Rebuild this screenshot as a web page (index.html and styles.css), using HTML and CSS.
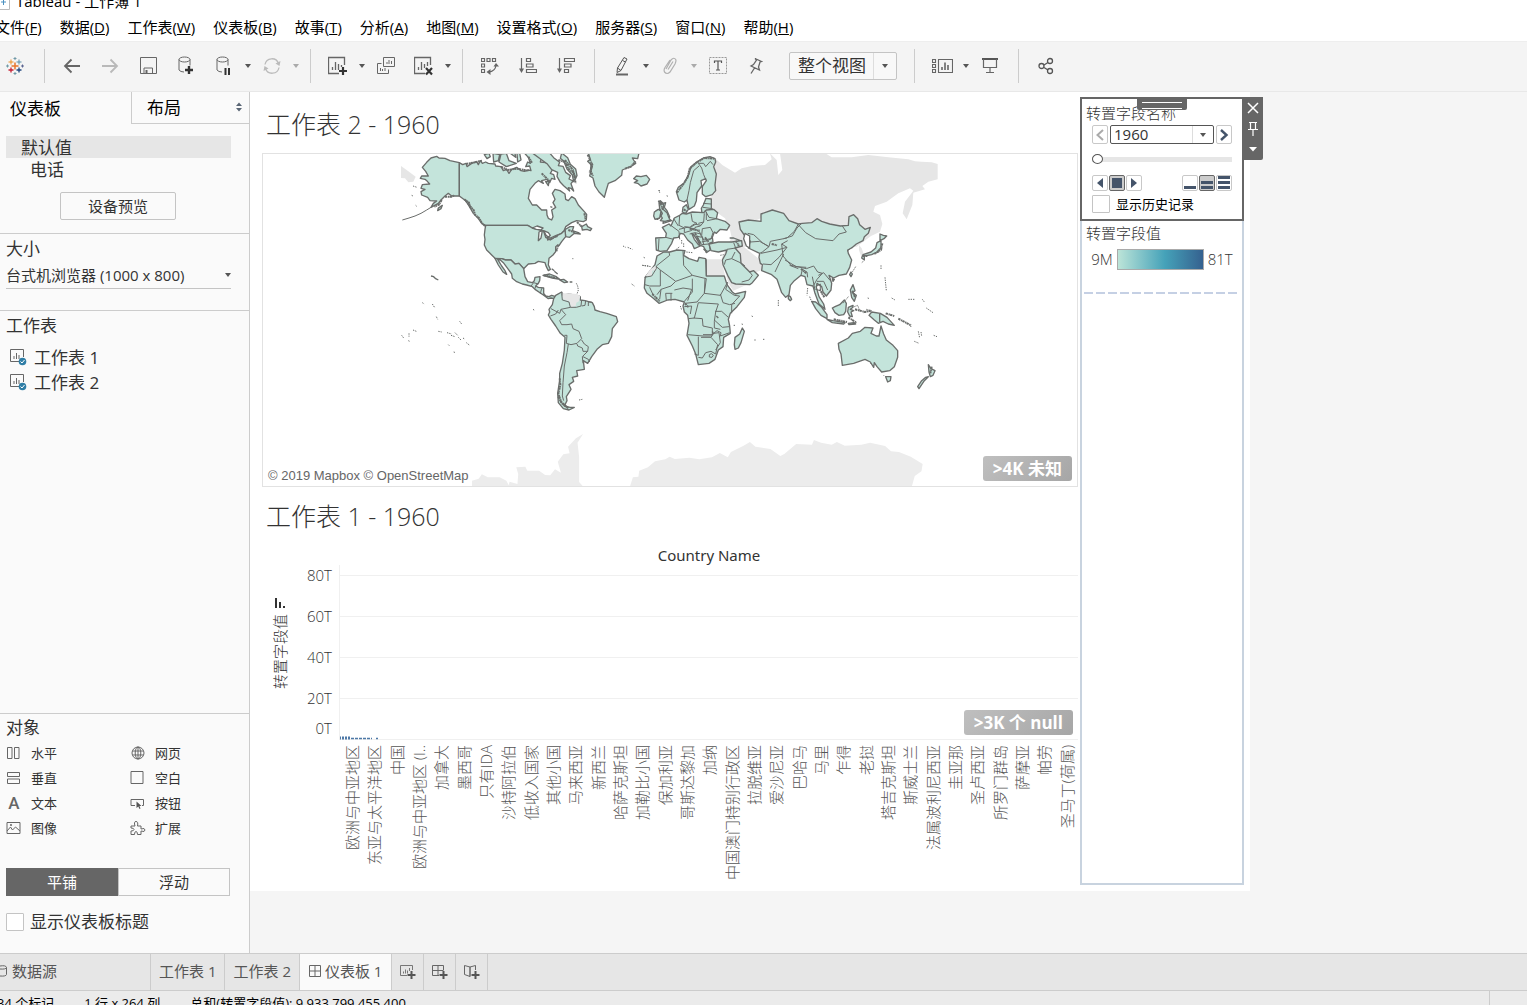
FILE: index.html
```html
<!DOCTYPE html>
<html lang="zh-CN">
<head>
  <meta charset="UTF-8">
  <meta name="viewport" content="width=device-width, initial-scale=1">
  <title>Tableau - 工作簿 1</title>
  <link rel="stylesheet" href="styles.css">
</head>
<body>

  <header class="titlebar">
    <svg width="12" height="14" viewBox="0 0 12 14"><path d="M0 12.500H9.500V0" fill="none" stroke="#bbb"/><path d="M1 5h5M3.500 2v6" stroke="#4a90c0"/></svg>
    <span>Tableau - 工作簿 1</span>
  </header>

  <nav class="menubar">
    <a href="#">文件(<u>F</u>)</a>
    <a href="#">数据(<u>D</u>)</a>
    <a href="#">工作表(<u>W</u>)</a>
    <a href="#">仪表板(<u>B</u>)</a>
    <a href="#">故事(<u>T</u>)</a>
    <a href="#">分析(<u>A</u>)</a>
    <a href="#">地图(<u>M</u>)</a>
    <a href="#">设置格式(<u>O</u>)</a>
    <a href="#">服务器(<u>S</u>)</a>
    <a href="#">窗口(<u>N</u>)</a>
    <a href="#">帮助(<u>H</u>)</a>
  </nav>

  <div class="toolbar">
    <button class="logo" aria-label="Tableau">
      <svg width="18" height="18" viewBox="0 0 18 18" fill="none">
        <path d="M9 5.500v7M5.500 9h7" stroke="#e8762c" stroke-width="1.500"/>
        <path d="M5 2.500v5M2.500 5h5" stroke="#eb9129"/>
        <path d="M13 2.500v5M10.500 5h5" stroke="#5c8fa5"/>
        <path d="M5 10.500v5M2.500 13h5" stroke="#c72035" stroke-width="1.300"/>
        <path d="M13 10.500v5M10.500 13h5" stroke="#1f457e" stroke-width="1.300"/>
        <path d="M9 0v3M7.500 1.500h3M9 15v3M7.500 16.500h3M1.500 7.500v3M0 9h3" stroke="#7199a6"/>
        <path d="M16.500 7.500v3M15 9h3" stroke="#5c6692"/>
      </svg>
    </button>
    <span class="sep"></span>
    <button class="tool" aria-label="后退"><svg width="18" height="16" viewBox="0 0 18 16"><path d="M17 8H2M8.500 1.500L2 8l6.500 6.500" fill="none" stroke="#666" stroke-width="1.800"/></svg></button>
    <button class="tool" aria-label="前进"><svg width="18" height="16" viewBox="0 0 18 16"><path d="M1 8h15M9.500 1.500L16 8l-6.500 6.500" fill="none" stroke="#b9b9b9" stroke-width="1.800"/></svg></button>
    <button class="tool" aria-label="保存"><svg width="17" height="17" viewBox="0 0 17 17"><path d="M.5.5h16v16H.500zM4 16v-5h8.500v5" fill="none" stroke="#666"/><path d="M5.500 13h2v3h-2z" fill="#666"/></svg></button>
    <button class="tool" aria-label="新建数据源">
      <svg width="18" height="20" viewBox="0 0 18 20"><g fill="none" stroke="#666"><ellipse cx="7.500" cy="3.500" rx="5.500" ry="2.500"/><path d="M2 3.500v10.500q1.500 2 5 2M13 3.500v6"/></g><path d="M12 10v8M8 14h8" stroke="#333" stroke-width="2.400"/></svg>
    </button>
    <button class="tool" aria-label="暂停自动更新">
      <svg width="18" height="20" viewBox="0 0 18 20"><g fill="none" stroke="#666"><ellipse cx="7.500" cy="3.500" rx="5.500" ry="2.500"/><path d="M2 3.500v10.500q1.500 2 5 2M13 3.500v6"/></g><path d="M10.500 12v7M14 12v7" stroke="#333" stroke-width="2"/></svg>
    </button>
    <button class="caret" aria-label="更多"></button>
    <button class="tool" aria-label="刷新">
      <svg width="18" height="18" viewBox="0 0 18 18"><path d="M2 7.500A7 7 0 0 1 15.500 6.500M16 10.500A7 7 0 0 1 2.500 11.500" fill="none" stroke="#bbb" stroke-width="1.300"/><path d="M17.500 4l-1 5-4-2.500zM.500 14l1-5 4 2.500z" fill="#bbb"/></svg>
    </button>
    <button class="caret dim" aria-label="更多"></button>
    <span class="sep"></span>
    <button class="tool" aria-label="新建工作表">
      <svg width="20" height="20" viewBox="0 0 20 20"><path d="M16.500 9V1.500h-16v16H11M4.500 14v-3M7.500 14V6M10.500 14V8M13.500 11V9" fill="none" stroke="#666" stroke-width="1.300"/><path d="M15 11v8M11 15h8" stroke="#333" stroke-width="2.200"/></svg>
    </button>
    <button class="caret" aria-label="更多"></button>
    <button class="tool" aria-label="复制">
      <svg width="18" height="18" viewBox="0 0 18 18"><path d="M6.500.5h11v9h-11zM4.500 6.500h-4v10h11v-4M3.500 14v-3M5.500 14v-2M8 14v-3M10 7V5M12 7V3M14.500 7V4" fill="none" stroke="#666"/></svg>
    </button>
    <button class="tool" aria-label="清除">
      <svg width="20" height="20" viewBox="0 0 20 20"><path d="M16.500 9V1.500h-16v16H11M4.500 14v-3M7.500 14V6M10.500 12V8M13.500 10V6" fill="none" stroke="#666" stroke-width="1.300"/><path d="M12 12l6 6.500M18 12l-6 6.500" stroke="#333" stroke-width="2.200"/></svg>
    </button>
    <button class="caret" aria-label="更多"></button>
    <span class="sep"></span>
    <button class="tool" aria-label="交换行和列">
      <svg width="18" height="18" viewBox="0 0 18 18"><path d="M.5 1.500h3v3h-3zM6 1.500h3v3H6zM11.500 1.500h3v3h-3zM.500 7h3v3h-3zM.500 12.500h3v3h-3zM7.500 15Q14.500 14.500 15 8" fill="none" stroke="#666" stroke-width="1.200"/><path d="M12.500 9.500L15 6l3 3.500zM9.500 12L5.500 15l4 3z" fill="#666"/></svg>
    </button>
    <button class="tool" aria-label="升序排序">
      <svg width="18" height="17" viewBox="0 0 18 17"><path d="M2.500 1v13M7.500 1.500h4v3h-4zM7.500 7h6.500v3H7.500zM7.500 12.500h10v3h-10z" fill="none" stroke="#666" stroke-width="1.200"/><path d="M0 11.500h5L2.500 16z" fill="#666"/></svg>
    </button>
    <button class="tool" aria-label="降序排序">
      <svg width="18" height="17" viewBox="0 0 18 17"><path d="M2.500 1v13M7.500 1.500h10v3h-10zM7.500 7h6.500v3H7.500zM7.500 12.500h4v3h-4z" fill="none" stroke="#666" stroke-width="1.200"/><path d="M0 11.500h5L2.500 16z" fill="#666"/></svg>
    </button>
    <span class="sep"></span>
    <button class="tool" aria-label="突出显示">
      <svg width="14" height="20" viewBox="0 0 14 20"><path d="M9 1.500l3 1.500-6 11.500-4 2 .5-4.500zM2.500 12l3.500 2.500M7.500 4.500l3 1.500" fill="none" stroke="#555"/><path d="M1 18.500h12" stroke="#666" stroke-width="2"/></svg>
    </button>
    <button class="caret" aria-label="更多"></button>
    <button class="tool" aria-label="组成员">
      <svg width="14" height="18" viewBox="0 0 14 18"><path d="M3 12l5-9q3-3.500 5 0 0 2-1 4l-5 8q-3 3-5.500 0-1-2 .5-4.500L7 3M5 12.500l5-8" fill="none" stroke="#b0b0b0" stroke-width="1.200"/></svg>
    </button>
    <button class="caret dim" aria-label="更多"></button>
    <button class="tool" aria-label="显示标记标签">
      <svg width="18" height="17" viewBox="0 0 18 17"><path d="M.5.500h17v16H.500z" fill="none" stroke="#999" stroke-dasharray="2 1"/><path d="M5.500 6V4h7v2M9 4v9M7 13h4" fill="none" stroke="#555" stroke-width="1.200"/></svg>
    </button>
    <button class="tool" aria-label="固定轴">
      <svg width="14" height="18" viewBox="0 0 14 18"><path d="M6 1.500l6.500 3-1.500.500-1.500 5 1 3L2 9l2.500-1.500 3-4.500zM5.500 11L2 16.500" fill="none" stroke="#666" stroke-width="1.300"/></svg>
    </button>
    <span class="fit">
      <select aria-label="适合"><option>整个视图</option></select>
    </span>
    <span class="sep"></span>
    <button class="tool" aria-label="智能推荐">
      <svg width="21" height="16" viewBox="0 0 21 16"><path d="M.5 1.500h3v3h-3zM.500 6.500h3v3h-3zM.500 11.500h3v3h-3zM6.500 1.500h14v13h-14z" fill="none" stroke="#666" stroke-width="1.100"/><path d="M10 12V9M13 12V4.500M16 12V7" stroke="#666" stroke-width="1.600"/></svg>
    </button>
    <button class="caret" aria-label="更多"></button>
    <button class="tool" aria-label="演示模式">
      <svg width="18" height="17" viewBox="0 0 18 17"><path d="M1 2h16" stroke="#555" stroke-width="2"/><path d="M2.500 2v8.500h13V2M9 10.500v5M5 15.500h8" fill="none" stroke="#666" stroke-width="1.200"/></svg>
    </button>
    <span class="sep"></span>
    <button class="tool" aria-label="共享">
      <svg width="16" height="18" viewBox="0 0 16 18"><g fill="none" stroke="#555" stroke-width="1.300"><circle cx="3.500" cy="9" r="2.500"/><circle cx="12" cy="4" r="2.500"/><circle cx="12" cy="14" r="2.500"/><path d="M6 8l4-2.500M6 10.500l4 2.500"/></g></svg>
    </button>
  </div>

  <div class="workspace">

    <aside class="sidebar">
      <div class="side-tabs">
        <button class="side-tab active">仪表板</button>
        <button class="side-tab">布局
          <svg width="6" height="10" viewBox="0 0 6 10"><path d="M0 4l3-3.500L6 4zM0 6l3 3.500L6 6z" fill="#5a6675"/></svg>
        </button>
      </div>

      <section class="panel devices">
        <ul>
          <li class="selected">默认值</li>
          <li class="child">电话</li>
        </ul>
        <button class="btn">设备预览</button>
      </section>

      <section class="panel size">
        <h2><label for="size">大小</label></h2>
        <div class="size-select">
          <select id="size"><option>台式机浏览器 (1000 x 800)</option></select>
        </div>
      </section>

      <section class="panel sheets">
        <h2>工作表</h2>
        <ul>
          <li><svg width="17" height="17" viewBox="0 0 17 17"><path d="M13.500 8V.500H.500v12H9M4 10V7M6.500 10V4M9 10V6" fill="none" stroke="#666"/><circle cx="12.500" cy="12.500" r="3.800" fill="#2f7ea6"/><path d="M10.500 12.500l1.500 1.500 2.500-3" fill="none" stroke="#fff"/></svg>工作表 1</li>
          <li><svg width="17" height="17" viewBox="0 0 17 17"><path d="M13.500 8V.500H.500v12H9M4 10V7M6.500 10V4M9 10V6" fill="none" stroke="#666"/><circle cx="12.500" cy="12.500" r="3.800" fill="#2f7ea6"/><path d="M10.500 12.500l1.500 1.500 2.500-3" fill="none" stroke="#fff"/></svg>工作表 2</li>
        </ul>
      </section>

      <section class="panel objects">
        <h2>对象</h2>
        <div class="object-grid">
          <button><svg width="16" height="16" viewBox="0 0 16 16"><path d="M1.500 2.500h4.500v11H1.500zM8.500 2.500H13v11H8.500z"/></svg>水平</button>
          <button><svg width="16" height="16" viewBox="0 0 16 16"><circle cx="8" cy="8" r="6"/><ellipse cx="8" cy="8" rx="2.800" ry="6"/><path d="M2.500 6h11M2.500 10h11M8 2v12"/></svg>网页</button>
          <button><svg width="16" height="16" viewBox="0 0 16 16"><path d="M1.500 2.500h12v4h-12zM1.500 9h12v4.500h-12z"/></svg>垂直</button>
          <button><svg width="16" height="16" viewBox="0 0 16 16"><path d="M1 1.500h12v12H1z"/></svg>空白</button>
          <button><span class="letter">A</span>文本</button>
          <button><svg width="16" height="16" viewBox="0 0 16 16"><path d="M5 10.500H1v-6h12.500v6H12"/><path d="M6.500 6.500l5 4.500H9.500l1 2.500-1 .5-1.200-2.500-1.800 1.500z" fill="#555" stroke="none"/></svg>按钮</button>
          <button><svg width="16" height="16" viewBox="0 0 16 16"><path d="M1 2.500h13v11H1zM1 11l3.500-4 2 3 3-3 4.500 4"/><circle cx="5" cy="5" r=".7"/></svg>图像</button>
          <button><svg width="16" height="16" viewBox="0 0 16 16"><path d="M1 6h4Q3.500 1.500 6 1.500T7.500 6H11v3q4-1.500 4 1t-4 1v3.500H7.500q0-3-1.500-3t-1.500 3H1V11q3 0 3-1.500T1 8z"/></svg>扩展</button>
        </div>
        <div class="toggle">
          <button class="on">平铺</button>
          <button>浮动</button>
        </div>
        <label class="check"><input type="checkbox">显示仪表板标题</label>
      </section>
    </aside>

    <main class="canvas">
      <div class="dashboard">
        <div class="views">

          <section>
            <h1>工作表 2 - 1960</h1>
            <div class="map">
              <svg viewBox="3 3 2442 996" role="img" aria-label="世界地图">
                <!-- land without data -->
                <g class="nodata">
                  <g transform="translate(399 -9)">
                    <path d="M18 48L38 62 48 70 62 80 55 95 40 97 30 85 18 84z"/>
                  </g>
                  <g transform="translate(1119 -9)">
                    <path d="M240 25L262 45 300 68 320 55 350 48 390 45 410 28 405 10 425 30 430 75 442 60 435 10 470 9 570 9 590 22 650 22 700 15 760 22 820 28 840 34 860 35 890 37 908 42V88L880 95 862 108 870 118 835 128 832 165 815 208 803 190 810 155 835 122 825 115 790 130 755 155 720 168 715 185 735 195 742 222 735 245 708 258 665 290 640 290 500 240 410 190 320 230 340 270 328 292 345 305 378 332 380 360 350 372 345 400 295 422 280 400 260 325 290 262 285 240 270 205 235 180 215 150 240 130z"/>
                    <path d="M213 328h45l12 48h-57zM672 285l8 10 8 22-8 6-8-22z"/>
                  </g>
                  <g class="antarctica" transform="translate(624 801) scale(1.186 1)">
                    <path d="M5 198V182L22 176 30 163 45 172 75 172 92 182 98 196 100 185 120 192 122 162 117 142 140 140 145 152 175 152 190 165 203 166 215 148 230 158 222 125 236 103 252 100 248 80 268 55 286 42 272 68 276 110 276 186 285 198zM405 198L412 172 426 170 428 152 450 142 468 124 494 118 505 110 518 117 555 113 580 118 612 112 632 99 652 112 660 96 692 77 708 66 722 80 760 87 785 108 795 102 825 72 865 74 870 60 888 68 915 74 928 66 948 77 990 74 1012 68 1050 78 1065 94 1085 96 1115 110 1145 132 1142 154 1125 168 1118 198z"/>
                  </g>
                </g>

                <!-- Alaska, Canada, United States, Mexico -->
                <g class="land" transform="translate(399 -9)">
                  <path d="M193 38L165 32 150 25 132 24 125 19 108 24 95 37 82 52 92 64 100 78 80 78 76 85 90 88 97 94 104 102 82 104 78 115 90 118 78 125 80 135 98 142 105 152 125 153 115 160 108 172 130 160 138 150 150 138 160 130 170 138 193 138z"/>
                  <path class="border" d="M108 172L95 180 78 190 60 198 42 204 22 210"/>
                  <path d="M193 38L203 44 213 40 216 50 230 40 245 35 250 44 256 32 262 40 272 36 280 40 300 42 302 48 318 50 325 62 335 58 342 70 350 58 365 52 378 62 388 64 400 60 408 62 404 48 392 50 398 36 406 40 400 22 388 9 425 9 440 22 436 36 452 38 466 44 472 60 466 70 476 74 480 88 470 85 464 98 455 88 440 92 445 100 430 92 420 100 405 118 400 145 412 165 425 165 440 180 455 180 456 195 460 205 470 210 474 200 470 180 482 172 474 158 480 148 472 130 480 118 495 122 510 132 512 148 520 152 530 140 540 146 550 165 568 185 575 193 574 210 565 215 545 212 530 218 512 230 508 240 525 230 536 230 532 242 550 248 556 252 538 250 524 262 512 260 510 240 500 250 484 256 466 264 452 262 446 244 430 238 412 234 398 226 272 226 262 222 250 206 235 190 222 168 212 152 193 138z"/>
                  <path d="M272 226L398 226 412 234 430 238 446 244 452 262 466 270 484 258 500 250 510 240 512 260 500 275 492 287 488 285 482 290 482 305 474 315 462 325 460 345 466 358 460 362 454 350 450 338 430 334 420 340 400 342 386 356 372 340 360 342 348 330 332 330 320 326 300 325 285 310 275 300 268 285 270 268 268 255 270 238z"/>
                  <path d="M300 325L320 326 332 330 348 330 360 342 372 340 386 356 390 380 398 395 412 398 418 392 420 382 435 380 434 392 430 400 422 408 430 412 446 414 446 430 452 438 462 440 470 436 482 440 478 446 468 444 460 446 445 435 420 418 412 410 395 405 382 402 365 395 352 385 350 372 340 358 325 338 316 330 308 328 320 348 330 362 335 373 324 366 310 345z"/>
                  <path class="border" d="M408 408L416 398 430 402M422 408l-2 8M440 415l-4 16"/>
                  <path class="water" d="M412 234l14-6 18 6-6 6-14-2zM432 246l10-4-4 22-8 8zM446 242l14 6 6 8-6 6-8-8zM456 270l20-6M478 262l10-3"/>
                  <path d="M268 14l14-4 4 10-10 6zM294 10l20 4-4 18-14 4zM318 12l16-2 8 22 22 8-30 10-22-14zM346 10l14 0 2 12zM366 10l8 0 4 20-10 6zM412 9h52l12 14 18 14-4 10 14 2 8 18 14 10-4 10 12 6-6 8 8 22-8-8-8-2 4 10-18-16-10-10-10-18 2-12-18-8-14-18zM500 9l18 14 8 20 16 14 4 20-10 18-4-20-16-18-10-24-10-8zM452 95l10 0-2 12zM466 170l6 2"/>
                  <path d="M580 9L586 28 578 34 592 48 584 78 594 84 600 108 612 126 628 142 634 120 640 100 660 92 680 76 682 60 710 48 722 40 712 24 728 26 732 9zM716 86l8-8 14 2 16-4 10 12-8 14-18 6-10-8-10-2 10-6zM560 230l14-8 4 8 12 6-4 6-10-4-14 2z"/>
                  <path d="M444 376l20-4 20 8 10 8-22-4zM494 390l12-2 12 8-10 2zM524 396h8M470 356l8 6M478 364l10 8M108 378l8 2 6 6 8 4M128 182l10-6 4-10-12 8zM784 182l10-4 4 20-10 10-8-4zM796 152l8 8 8-2-4 14 8 10 8 18-2 8 8 4-26 8 2-10-4-6 6-8-6-14-6-8z"/>
                </g>

                <!-- South America -->
                <g class="land" transform="translate(399 -9)">
                  <path d="M482 436L500 426 505 436 520 432 545 436 556 440 556 450 570 452 592 458 598 470 600 480 615 485 635 490 664 500 668 515 652 536 650 560 640 580 622 584 606 598 590 620 578 640 565 632 568 658 545 662 548 678 532 682 536 694 522 704 528 718 514 740 516 752 508 768 525 772 538 772 522 780 505 776 490 758 488 730 494 690 494 670 502 640 508 600 510 562 496 550 482 528 468 508 460 495 464 486 462 478 472 464 476 446z"/>
                  <path class="gap" d="M502 430L520 430 545 432 556 438 552 454 544 458 542 468 530 472 526 466 524 454 504 448z"/>
                  <path class="border" d="M500 430L502 450 522 456 526 472 498 478 494 490 468 476M466 498L482 492 490 480M498 478L512 494 494 512 500 524 516 524 530 522 534 536 552 544 560 566 546 580 528 584 514 580 516 556 508 556M560 570l8 12 12 8-2 14-14 0-2-10-14-6-2-6M578 604l-16 16 2 20M564 620l16 8 4 8M520 582l-4 26-8 40-4 50-2 40 4 14M526 472l18 0 14-4 2-18M560 468l10-2 2-14M580 468l0-12 10 0"/>
                  <g class="fjords"><path d="M208 148l14 10 4 14 10 8 4 14 12 10 8 14 12 12M490 30l20 6 12 22 14 10 6 18M212 152l20 24M494 685l2 20-6 26 8 24 22 20M490 740l10 20 20 14M140 150l-8 14-14 6M150 140l20 0 8-4M588 40l0 26 6 12M690 56l18-6 14-16M790 152l12 10M546 216l14 14M490 284l-6 20M213 42l30-6 18-4M318 50l20 10 28-4 34 6M400 20l12 20M440 70l24 24M510 30l24 30 8 40M446 376l40 8M520 240l22 8M568 190l4 18M578 14l14 30-8 24"/></g>
                  <path class="isles" d="M544 400l4 8 2 12-4 12M414 478l6 4M20 556l6 8M42 550l0 10M40 572l4 2M54 540l10 4M82 458l6 4M112 462l8 12M124 500l4 8M194 514l6 8M130 544l10 2M156 548l14 4M168 556l12 4M180 548l8 8M190 562l8 8M204 564l6 4M214 578l10 8M160 584l4 4M176 606l6 2M684 288l8 4M698 292l14 6M742 346l20 2M746 322l4 2M710 402l8 6M792 120l2 8M54 108l12 4M50 136l4 2M62 166l4 4M532 326l3 0M552 750l10-2"/>
                </g>

                <!-- Europe, Africa, Asia and Oceania -->
                <g class="land" transform="translate(1119 -9)">
                  <path d="M124 125L130 112 148 98 162 72 168 50 185 36 205 24 225 20 240 26 242 36 236 50 244 72 240 105 242 122 232 134 212 140 202 132 202 110 214 92 212 86 198 92 200 108 186 128 184 152 178 168 162 178 156 150 148 156 132 150z"/>
                  <path class="border" d="M156 150l6-28 4-24 10-36 16-14M190 40l10 14 6 20 6 14M190 40l16 0 6 10 14-16 8 10"/>
                  <path d="M144 172l10-8 6 14-8 12-10-4zM72 158l14 6-2 14 12 10 6 16 4 6-16 4-14-2 6-8-4-6 4-8-8-14zM58 186l12-8 8 6-4 20-14 4-4-10zM205 165l8-20 16 2 0 28 8 8 2 10-38-2-2-16z"/>
                  <path d="M82 232L102 222 108 228 118 204 134 196 142 190 154 192 172 186 206 188 214 180 236 178 248 188 244 206 270 214 284 226 276 240 256 238 244 250 238 246 232 262 234 276 222 280 226 300 214 308 206 290 196 286 184 266 176 254 170 250 178 268 190 284 196 288 178 296 172 282 158 270 146 252 136 250 130 262 116 264 110 280 96 302 76 304 64 300 62 264 92 262 94 250z"/>
                  <path class="border" d="M110 228l22 16 2 24M134 196l-2 30 16 8 0 14M168 190l4 24 14 6-20 12-18-2M208 190l-2 26-16 4M206 216l-10 12-16 4M202 236l24-4 8 16-6 18-22 4-6-14zM246 206l-30 6M178 236l16 10 6 16-16-4M92 262l24 6M72 266l-2 34M190 266l10 18 20-2M214 210l0-24M116 206l14 22M132 238l24-6 20 4M148 248l20-6 14-10M166 230l12-8 20 4M164 252l16-4 18 4M200 276l18-4 14-8M202 262l4 22M186 258l10 24M204 160l24 2M204 172l28 4M210 180l12 22 22 4"/>
                  <path d="M222 282L250 276 290 276 320 272 322 288 300 294 316 312 318 340 332 354 344 366 356 362 370 376 352 398 344 404 302 402 290 398 278 376 264 344 262 330 272 312 276 300 250 306 228 302zM284 264l12 0 20 8"/>
                  <path class="border" d="M296 278l6 16M276 298l26-4M272 330l18-4 10-20M272 330l-4 14M290 326l30 14 10 8M344 366l8 10-10 14-22 6"/>
                  <path d="M60 344L66 318 86 306 104 306 126 300 150 302 146 316 162 326 188 334 192 322 212 326 214 378 268 378 276 404 292 426 300 432 332 424 328 442 306 470 286 490 280 508 284 528 286 550 266 562 264 590 250 600 240 628 222 640 190 644 182 612 172 588 156 556 162 520 158 496 148 486 144 468 148 456 120 448 98 450 72 460 54 444 36 430 28 414 30 386 32 380z"/>
                  <path class="gap" d="M32 378l14-20 14-10 6 4-2 8-12 2-2 16z"/>
                  <path class="border" d="M102 306l2 10-40 32 0 8-14 22-22 4M64 350l12 10 0 48-32 0-14-4M76 360l46 34 50-18-26-30-2-44M172 376l42 10M214 328v50M122 394l-14 14-30 10-12 16M44 412l10 22M78 418l-4 30M92 430l2 22M108 430v22M92 430h20M118 420l26-6 26 4-12 34M172 386l0 40-24 28M210 386l-2 44-22 26-36 4M214 386l-6 44 48 6 22-40M256 432l8 26 20 6 16-4M278 400l-6 18 26 18 16 2-24 26 0 26M190 458l60 4-8 24-4 28M190 458l-12 46-18 2M148 470l22-2-4 24M176 504l26 2 2 22 28 6 0 20-28 0M158 554l46 4 22 0 20-16 12 6-2 10 28-10M190 560l0 56-12-4M198 562l30 0 20 22-6 28-14-8-16 4-10 16-12-2M228 562l8-12 16-2 4 30-14 22M240 484l20 0 20 18M238 510l24 22 20-2M238 514l0 20 18 4"/>
                  <path d="M298 584l2-22 14-10 8-18 6 10-10 34-8 16-10 4z"/>
                  <path class="border" d="M223 614l6-3 6 5-4 6-8-1z"/>
                  <path d="M312 216L340 210 378 214 378 192 412 180 446 190 462 212 490 222 502 220 530 218 546 206 560 214 584 222 616 228 640 226 642 200 656 194 668 206 674 224 690 238 706 232 700 250 688 260 684 272 664 282 650 294 638 300 640 310 650 330 644 352 634 372 612 376 596 384 582 376 590 400 588 420 574 438 564 426 560 410 546 400 544 412 552 440 566 462 570 478 552 462 540 430 534 408 516 404 510 380 498 376 478 392 466 406 462 434 452 442 440 428 426 388 410 374 380 362 382 344 376 340 372 322 374 310 340 294 346 274 330 258 316 238z"/>
                  <path class="border" d="M338 250l18 4 26 24 20 12 4-16 50-10 22-20 12-22M346 276l28-2 28 16-20 16-8 4M378 310l48-10 30-8-24 30-24 22-24-2M456 292l-16-10 18-10M500 220l-14 14-14 24-26 8M490 224l22 24 30 18 52 6 18-20 22-6-12-18M440 282l4 36 24 28 46 10 22-8 12 18 14 4-16 18-10 18M446 312l-6 12-20 42M450 330l34 20 30 2M464 346l26 10M498 376l4-18 14 8 2 16M532 380l8 40M550 376l16-8 20 24M546 394l20 0 12 26M542 410l14-8 0 20-14-4M636 304l14-12"/>
                  <path d="M460 436l6 4 4 8-4 4-6-6zM735 252l10 4 10 2-8 8-12 6zM738 272l0 20-12 14-16 8-22 4 0 12-8-6 4-10 24-8 14-12 4-16zM648 366l4 6-4 8-4-6zM592 386l6 2-4 6zM530 454l12 2 18 16 16 22 0 12-18-10-16-20zM576 508l18 4 36 6-4 4-34-4zM592 474l8-4 14-6 14-14 6 10-2 24-6 10-14 2-12-8zM640 472l14-6 0 6-8 6 10 4-8 4 4 14-8-2-6-12zM646 420l8-16 6 18-8 6 12 8-6 18-8-12zM640 520l16-2 6 4-20 2zM710 486l26 4 20 12 22 24-18-4-16-8-14 6-12-10-16-14zM734 490v26M610 580L640 564 652 550 676 544 690 532 714 534 708 550 724 558 732 558 738 528 746 552 754 570 774 586 788 602 788 622 778 650 764 662 740 666 726 650 718 638 716 652 706 636 690 628 656 640 622 646 618 612 612 598zM752 680l16 0-2 12-8 4zM880 644l8 12 12 6-6 14-8 4-4-14zM880 680l-12 12-16 24-4-6 12-18 12-10z"/>
                  <path class="water" d="M330 250l14 8 0 36-10-6-8-22zM232 544l4 8M244 498l6 6"/>
                  <g class="fjords"><path d="M126 128l18-24 14-22 6-26 20-18 24-14 30 2M146 178l10 6M76 160l8 20M652 422l8 20M206 296l10 8M596 508l40 8M640 502l24 16M660 478l30 8 18-4M752 490l26 8M790 506l38 20M410 282l16 4M498 356l16 14M52 432l22 22M210 262l10 14M150 460l10 12M302 272l10 16M568 442l-14-24M890 650l-4 20M742 280l-4 20-20 12M684 318l14 0M180 250l16 30M164 236l30 6"/></g>
                  <path class="isles" d="M72 120l2 8M96 136l2 6M140 270l0 12M124 298l10-8M146 280v14M154 306l18 2M256 316l10-2M518 414l-2 22M524 440l6 16M640 440l-16 20M658 470l10-4 6 16M686 488l10-6M826 528l4 4M838 574l14 6M850 544l4 20M858 546l2 12M896 556l10 4M738 346v14M750 382l4 40M698 444l6 2M770 444l10 6M820 448h20M862 448l6 8M874 474l20 14M350 498l4 2M358 570h4M384 568h4M296 526l6 0M320 522l6 2M22 346l26 4M430 450v20M136 468l4 12M648 524l16-6M706 640l4 2M746 676l2 2M662 350l-10 16M684 334l-4 6M694 478l16 4M606 520h6"/>
                </g>
              </svg>
              <small>© 2019 Mapbox © OpenStreetMap</small>
              <button class="badge">&gt;4K 未知</button>
            </div>
          </section>

          <section class="chart-sheet">
            <h1>工作表 1 - 1960</h1>
            <h3>Country Name</h3>
            <div class="chart">
              <div class="axis-title">
                <svg width="12" height="12" viewBox="0 0 12 12"><path d="M2 1v10M6 5v6M10 9v2" stroke="#333" stroke-width="2"/></svg>
                <span>转置字段值</span>
              </div>
              <div class="ticks"><span>80T</span><span>60T</span><span>40T</span><span>20T</span><span>0T</span></div>
              <div class="plot">
                <svg viewBox="0 0 739 175" preserveAspectRatio="none">
                  <path d="M0 10.500H739M0 51.500H739M0 92.500H739M0 133.500H739M0 174.500H739M.500 0V175" stroke="#f0f0f0"/>
                  <path d="M1 173h1M3 173h2M6 173h2M9 173h2" stroke="#4e79a7" stroke-width="3"/>
                  <path d="M12 173.500h21M37 173.500h2" stroke="#4e79a7" stroke-width="1.500" stroke-dasharray="3 1"/>
                </svg>
                <button class="badge">&gt;3K 个 null</button>
              </div>
              <div class="countries">
                <span>欧洲与中亚地区</span>
                <span>东亚与太平洋地区</span>
                <span>中国</span>
                <span>欧洲与中亚地区 (I..</span>
                <span>加拿大</span>
                <span>墨西哥</span>
                <span>只有IDA</span>
                <span>沙特阿拉伯</span>
                <span>低收入国家</span>
                <span>其他小国</span>
                <span>马来西亚</span>
                <span>新西兰</span>
                <span>哈萨克斯坦</span>
                <span>加勒比小国</span>
                <span>保加利亚</span>
                <span>哥斯达黎加</span>
                <span>加纳</span>
                <span>中国澳门特别行政区</span>
                <span>拉脱维亚</span>
                <span>爱沙尼亚</span>
                <span>巴哈马</span>
                <span>马里</span>
                <span>乍得</span>
                <span>老挝</span>
                <span>塔吉克斯坦</span>
                <span>斯威士兰</span>
                <span>法属波利尼西亚</span>
                <span>圭亚那</span>
                <span>圣卢西亚</span>
                <span>所罗门群岛</span>
                <span>萨摩亚</span>
                <span>帕劳</span>
                <span>圣马丁(荷属)</span>
              </div>
            </div>
          </section>
        </div>

        <div class="legends">
          <section class="pages">
            <div class="grip"></div>
            <div class="card-tools">
              <button aria-label="移除"><svg width="12" height="12" viewBox="0 0 12 12"><path d="M1 1l10 10M11 1L1 11" stroke="#fff" stroke-width="1.500"/></svg></button>
              <button aria-label="固定"><svg width="12" height="14" viewBox="0 0 12 14"><path d="M2 .500h8M3.500 .500v7M8.500 .500v7M1 7.500h10M6 7.500V14" fill="none" stroke="#fff" stroke-width="1.200"/></svg></button>
              <button aria-label="更多选项"><svg width="8" height="5" viewBox="0 0 8 5"><path d="M0 0h8L4 4.500z" fill="#fff"/></svg></button>
            </div>
            <h2>转置字段名称</h2>
            <div class="row">
              <button class="mini" aria-label="上一个"><svg width="10" height="12" viewBox="0 0 10 12"><path d="M8 1L2.500 6 8 11" fill="none" stroke="#aaa" stroke-width="2"/></svg></button>
              <span class="year"><select aria-label="转置字段名称"><option>1960</option></select></span>
              <button class="mini" aria-label="下一个"><svg width="10" height="12" viewBox="0 0 10 12"><path d="M2 1l5.500 5L2 11" fill="none" stroke="#44546a" stroke-width="2.400"/></svg></button>
            </div>
            <input class="slider" type="range" min="0" max="58" value="0" aria-label="年份">
            <div class="row playback">
              <button class="mini" aria-label="向后播放"><svg width="14" height="14" viewBox="0 0 14 14"><path d="M10 2v10L4 7z" fill="#44546a"/></svg></button>
              <button class="mini on" aria-label="停止"><svg width="14" height="14" viewBox="0 0 14 14"><path d="M2 2h10v10H2z" fill="#44546a"/></svg></button>
              <button class="mini" aria-label="向前播放"><svg width="14" height="14" viewBox="0 0 14 14"><path d="M4 2v10l6-5z" fill="#44546a"/></svg></button>
              <span class="spacer"></span>
              <button class="mini" aria-label="慢速"><svg width="14" height="14" viewBox="0 0 14 14"><path d="M1 10h12v3H1z" fill="#44546a"/></svg></button>
              <button class="mini on" aria-label="中速"><svg width="14" height="14" viewBox="0 0 14 14"><path d="M1 5h12v3H1zM1 10h12v3H1z" fill="#44546a"/></svg></button>
              <button class="mini" aria-label="快速"><svg width="14" height="14" viewBox="0 0 14 14"><path d="M1 0h12v3H1zM1 5h12v3H1zM1 10h12v3H1z" fill="#44546a"/></svg></button>
            </div>
            <label class="check"><input type="checkbox">显示历史记录</label>
          </section>
          <section class="color-legend">
            <h2>转置字段值</h2>
            <div class="ramp"><span>9M</span><i></i><span>81T</span></div>
            <div class="drop-line"></div>
          </section>
        </div>
      </div>
    </main>
  </div>

  <nav class="sheet-tabs">
    <button class="source"><svg width="8" height="14" viewBox="0 0 8 14"><path d="M0 2q6-1 6.500 1.500v7Q6 12.500 0 12M0 5q6 .500 6.500-1.500" fill="none" stroke="#666"/></svg>数据源</button>
    <button>工作表 1</button>
    <button>工作表 2</button>
    <button class="current"><svg width="12" height="12" viewBox="0 0 12 12"><path d="M.5.500h11v11H.500zM6 0v12M0 6h12" fill="none" stroke="#666"/></svg>仪表板 1</button>
    <button class="add" aria-label="新建工作表"><svg width="16" height="16" viewBox="0 0 16 16"><path d="M12.500 6V1.500H.500v10H7M3.500 9.500V7.500M5.500 9.500V5.500M7.500 9.500V6.500M9.500 7V4" fill="none" stroke="#777"/><path d="M11.500 7v8M7.500 11h8" stroke="#555" stroke-width="2"/></svg></button>
    <button class="add" aria-label="新建仪表板"><svg width="16" height="16" viewBox="0 0 16 16"><path d="M11.500 6V1.500H.500v10H7M6 1.500v10M.500 6.500h11" fill="none" stroke="#666"/><path d="M11.500 7v8M7.500 11h8" stroke="#555" stroke-width="2"/></svg></button>
    <button class="add" aria-label="新建故事"><svg width="16" height="16" viewBox="0 0 16 16"><path d="M6 3L.500 1.500v9L6 12.500zL11.500 1.500V6M6 3v9.500" fill="none" stroke="#666"/><path d="M11.500 7v8M7.500 11h8" stroke="#555" stroke-width="2"/></svg></button>
  </nav>

  <footer class="statusbar">
    <span>34 个标记</span>
    <span>1 行 x 264 列</span>
    <span>总和(转置字段值): 9,933,799,455,400</span>
  </footer>

</body>
</html>
```
FILE: styles.css
```css
* {
  box-sizing: border-box;
}

body {
  margin: 0;
  height: 100vh;
  display: flex;
  flex-direction: column;
  overflow: hidden;
  font-family: "Open Sans", "Noto Sans CJK SC", sans-serif;
  font-size: 15px;
  color: #333;
  background: #fff;
}

button,
select,
input {
  font: inherit;
  color: inherit;
}

button {
  padding: 0;
  border: none;
  background: none;
  cursor: pointer;
}

select {
  appearance: none;
  border: none;
  background: none;
  padding: 0;
  outline: none;
}

h1, h2, h3, ul {
  margin: 0;
  padding: 0;
  list-style: none;
  font-weight: normal;
}

svg {
  flex: none;
}

/* title and menu */

.titlebar {
  flex: none;
  height: 16px;
  display: flex;
  align-items: flex-end;
  gap: 4px;
  padding-bottom: 5px;
  overflow: hidden;
  color: #000;
}

.titlebar span {
  line-height: 20px;
}

.menubar {
  flex: none;
  height: 25px;
  display: flex;
  align-items: center;
  gap: 18px;
  margin-left: -5px;
  padding-bottom: 2px;
  white-space: nowrap;
}

.menubar a {
  color: #000;
  text-decoration: none;
  line-height: 21px;
}

/* toolbar */

.toolbar {
  flex: none;
  height: 51px;
  display: flex;
  align-items: center;
  padding-bottom: 2px;
  background: #f4f4f4;
  border-top: 1px solid #eee;
  border-bottom: 1px solid #e8e8e8;
}

.toolbar button {
  flex: none;
  height: 30px;
  display: flex;
  align-items: center;
  justify-content: center;
}

.toolbar .logo {
  width: 30px;
  margin-right: 5px;
}

.toolbar .tool {
  width: 38px;
}

.toolbar .caret {
  width: 10px;
}

.caret::after,
.fit::after,
.size-select::after,
.year::after {
  content: "";
  border: 3px solid transparent;
  border-top: 4px solid #555;
  border-bottom: none;
}

.caret.dim::after {
  border-top-color: #aaa;
}

.sep {
  width: 1px;
  height: 34px;
  margin: 0 8px 0 9px;
  background: #ccc;
}

.fit {
  width: 108px;
  height: 28px;
  display: flex;
  align-items: center;
  margin: 0 8px 0 14px;
  padding-right: 8px;
  border: 1px solid #c4c4c4;
  border-radius: 2px;
  background: #f8f8f8;
}

.fit select {
  width: 84px;
  flex: 1;
  height: 26px;
  margin-right: 8px;
  padding-left: 8px;
  border-right: 1px solid #ddd;
  font-size: 17px;
}

/* sidebar */

.workspace {
  flex: 1;
  min-height: 0;
  display: flex;
}

.sidebar {
  flex: none;
  width: 250px;
  display: flex;
  flex-direction: column;
  background: #fafafa;
  border-right: 1px solid #ccc;
}

.side-tabs {
  display: flex;
  height: 32px;
  font-size: 17px;
  color: #000;
}

.side-tab {
  flex: 1;
  display: flex;
  align-items: center;
  justify-content: space-between;
  padding: 0 7px 2px 15px;
  border-left: 1px solid #ccc;
  border-bottom: 1px solid #ccc;
}

.side-tab.active {
  flex: none;
  width: 131px;
  padding-left: 10px;
  border: none;
}

.panel {
  padding: 0 18px 0 6px;
  border-bottom: 1px solid #ccc;
}

.panel h2 {
  font-size: 17px;
  line-height: 30px;
}

.devices {
  height: 110px;
  padding-top: 12px;
}

.devices li {
  padding-left: 15px;
  font-size: 17px;
  line-height: 23px;
}

.devices .selected {
  height: 22px;
  background: #e6e6e6;
}

.devices .child {
  padding-left: 24px;
}

.btn {
  display: block;
  width: 116px;
  height: 28px;
  margin: 11px 0 0 54px;
  padding-bottom: 2px;
  border: 1px solid #c4c4c4;
  border-radius: 2px;
}

.size {
  height: 77px;
}

.size-select {
  display: flex;
  align-items: center;
  height: 25px;
  padding-bottom: 3px;
  border-bottom: 1px solid #c4c4c4;
}

.size-select select {
  flex: 1;
}

.sheets {
  flex: 1;
}

.sheets ul {
  margin-top: 4px;
}

.sheets li {
  display: flex;
  align-items: center;
  gap: 7px;
  padding-left: 4px;
  font-size: 17px;
  line-height: 25px;
}

.objects {
  height: 239px;
  border: none;
}

.objects h2 {
  line-height: 28px;
}

.object-grid {
  display: grid;
  grid-template-columns: 124px 1fr;
  grid-auto-rows: 25px;
}

.object-grid button {
  display: flex;
  align-items: center;
  gap: 9px;
  padding-bottom: 4px;
  font-size: 13px;
}

.object-grid svg {
  fill: none;
  stroke: #666;
}

.letter {
  width: 16px;
  font-family: "Roboto", sans-serif;
  font-size: 17px;
  font-weight: 500;
  color: #666;
}

.toggle {
  display: flex;
  width: 224px;
  height: 28px;
  margin: 26px 0 16px;
}

.toggle button {
  flex: 1;
  padding-bottom: 2px;
  border: 1px solid #c4c4c4;
}

.toggle .on {
  background: #666;
  border-color: #666;
  color: #fff;
}

.check {
  display: flex;
  align-items: center;
  gap: 6px;
  font-size: 17px;
  line-height: 20px;
}

.check input {
  appearance: none;
  width: 18px;
  height: 18px;
  margin: 0;
  border: 1px solid #c4c4c4;
  border-radius: 1px;
  background: #fff;
}

/* dashboard */

.canvas {
  flex: 1;
  min-width: 0;
  background: #f5f5f5;
}

.dashboard {
  display: flex;
  max-width: 1000px;
  height: 799px;
  padding: 5px 6px 6px 12px;
  background: #fff;
}

.views {
  flex: 1;
  min-width: 0;
}

h1 {
  height: 56px;
  padding-left: 4px;
  font-size: 25px;
  font-weight: 300;
  line-height: 54px;
}

.map {
  position: relative;
  height: 334px;
  border: 1px solid #e2e2e2;
  overflow: hidden;
}

.map > svg {
  display: block;
  width: 100%;
  height: 100%;
}

.map small {
  position: absolute;
  left: 5px;
  bottom: 2px;
  font-family: "Liberation Sans", sans-serif;
  font-size: 13px;
  line-height: 16px;
  color: #666;
}

.nodata {
  fill: #e6e6e6;
}

.antarctica {
  fill: #ececec;
}

.land {
  fill: none;
  stroke: #6a6d6b;
  stroke-width: 4;
  stroke-linejoin: round;
}

.land path {
  fill: #c4e4db;
}

.land .border,
.land .fjords path,
.land .isles {
  fill: none;
}

.land .border {
  stroke-width: 3;
}

.land .water {
  fill: #fff;
}

.land .gap {
  fill: #e6e6e6;
  stroke: none;
}

.land .fjords {
  stroke-width: 6;
  stroke-dasharray: 7 2 4 1;
}

.land .isles {
  stroke-width: 3;
  stroke-dasharray: 4 3;
}

.badge {
  position: absolute;
  right: 5px;
  bottom: 5px;
  height: 25px;
  padding: 0 10px;
  border-radius: 3px;
  background: linear-gradient(135deg, #bfbfbf, #a6a6a6);
  color: #fff;
  font-size: 17px;
  font-weight: bold;
  line-height: 23px;
}

.chart-sheet {
  padding-top: 2px;
}

.chart-sheet h3 {
  padding-left: 78px;
  font-family: "Noto Sans", sans-serif;
  font-size: 15px;
  line-height: 20px;
  text-align: center;
}

.chart {
  display: grid;
  grid-template-columns: 37px 40px 1fr;
  grid-template-rows: 175px 140px;
}

.axis-title {
  display: flex;
  flex-direction: column;
  align-items: center;
  justify-content: center;
  gap: 5px;
  padding: 0 2px 19px 0;
}

.axis-title span,
.countries span {
  writing-mode: vertical-rl;
  text-orientation: sideways;
  transform: rotate(180deg);
  font-weight: 300;
  white-space: nowrap;
}

.ticks {
  display: flex;
  flex-direction: column;
  margin-top: -10px;
  padding-right: 7px;
  text-align: right;
  font-weight: 300;
  line-height: 41px;
}

.ticks span:last-child {
  line-height: 18px;
}

.plot {
  position: relative;
}

.plot svg {
  display: block;
  width: 100%;
  height: 100%;
}

.countries {
  grid-column: 3;
  display: grid;
  grid-template-columns: repeat(33, 1fr);
  align-items: start;
  justify-items: center;
  padding: 5px 0 0 2px;
  line-height: 22px;
  color: #555;
}

/* right column */

.legends {
  flex: none;
  width: 164px;
  margin-left: 2px;
  border: 2px solid #c8d3df;
}

.legends h2 {
  font-size: 15px;
  font-weight: 300;
  line-height: 24px;
}

.pages {
  position: relative;
  height: 124px;
  margin: -2px -2px 0;
  padding: 2px 10px 0;
  border: 2px solid #666;
}

.pages h2 {
  margin-left: -6px;
}

.grip {
  position: absolute;
  left: 55px;
  top: -1px;
  width: 50px;
  height: 12px;
  padding: 4px 5px;
  background: #666;
  border-radius: 0 0 2px 2px;
}

.grip::before {
  content: "";
  display: block;
  height: 5px;
  border: 1px solid #fff;
  border-width: 1px 0;
}

.card-tools {
  position: absolute;
  left: 100%;
  top: -2px;
  width: 21px;
  height: 63px;
  display: flex;
  flex-direction: column;
  background: #666;
  border-radius: 0 0 2px 2px;
}

.card-tools button {
  flex: 1;
  display: flex;
  align-items: center;
  justify-content: center;
}

.row {
  display: flex;
  gap: 2px;
  height: 19px;
}

.mini {
  flex: none;
  width: 16px;
  display: flex;
  align-items: center;
  justify-content: center;
  border: 1px solid #c8c8c8;
  border-radius: 2px;
}

.mini.on {
  border-color: #666;
  background: #ccc;
}

.year {
  flex: 1;
  display: flex;
  align-items: center;
  padding-right: 7px;
  border: 1px solid #555;
  border-radius: 2px;
}

.year select {
  flex: 1;
  min-width: 0;
  height: 17px;
  margin-right: 7px;
  padding-left: 3px;
  border-right: 1px solid #ddd;
  line-height: 17px;
}

.slider {
  appearance: none;
  display: block;
  width: 100%;
  height: 10px;
  margin: 10px 0 11px;
  background: linear-gradient(transparent 3px, #e6e6e6 3px 8px, transparent 8px);
}

.slider::-webkit-slider-thumb {
  appearance: none;
  width: 11px;
  height: 10px;
  border: 1px solid #555;
  border-radius: 50%;
  background: #fff;
}

.playback {
  height: 16px;
  gap: 1px;
}

.spacer {
  flex: 1;
}

.pages .check {
  margin-top: 3px;
  font-size: 13px;
  color: #000;
}

.color-legend {
  padding: 0 4px;
}

.ramp {
  display: flex;
  align-items: center;
  justify-content: center;
  gap: 4px;
  height: 28px;
  font-weight: 300;
}

.ramp i {
  width: 87px;
  height: 21px;
  border: 1px solid #aaa;
  background: linear-gradient(90deg, #bce4d8, #45a2b9 55%, #35618f);
}

.drop-line {
  height: 2px;
  margin: 19px -2px 0;
  background: repeating-linear-gradient(90deg, #c5d0e4 0 9px, transparent 9px 12px);
}

/* bottom bars */

.sheet-tabs {
  flex: none;
  display: flex;
  height: 38px;
  background: #e6e6e6;
  border-top: 1px solid #ccc;
  border-bottom: 1px solid #ccc;
  color: #555;
}

.sheet-tabs button {
  display: flex;
  align-items: center;
  justify-content: center;
  gap: 4px;
  padding: 0 8px 3px;
  border-right: 1px solid #ccc;
}

.sheet-tabs .source {
  width: 151px;
  justify-content: flex-start;
  padding-left: 0;
}

.sheet-tabs .current {
  padding: 0 9px 3px;
  background: #fafafa;
}

.sheet-tabs .add {
  width: 32px;
  padding: 0;
}

.statusbar {
  flex: none;
  height: 14px;
  display: flex;
  gap: 30px;
  padding-right: 37px;
  overflow: hidden;
  background: #ebebeb;
  font-size: 13px;
  line-height: 24px;
  color: #000;
  white-space: nowrap;
}

.statusbar span:first-child {
  margin-left: -3px;
}

.statusbar::after {
  content: "";
  margin-left: auto;
  border-left: 1px solid #ccc;
}
```
